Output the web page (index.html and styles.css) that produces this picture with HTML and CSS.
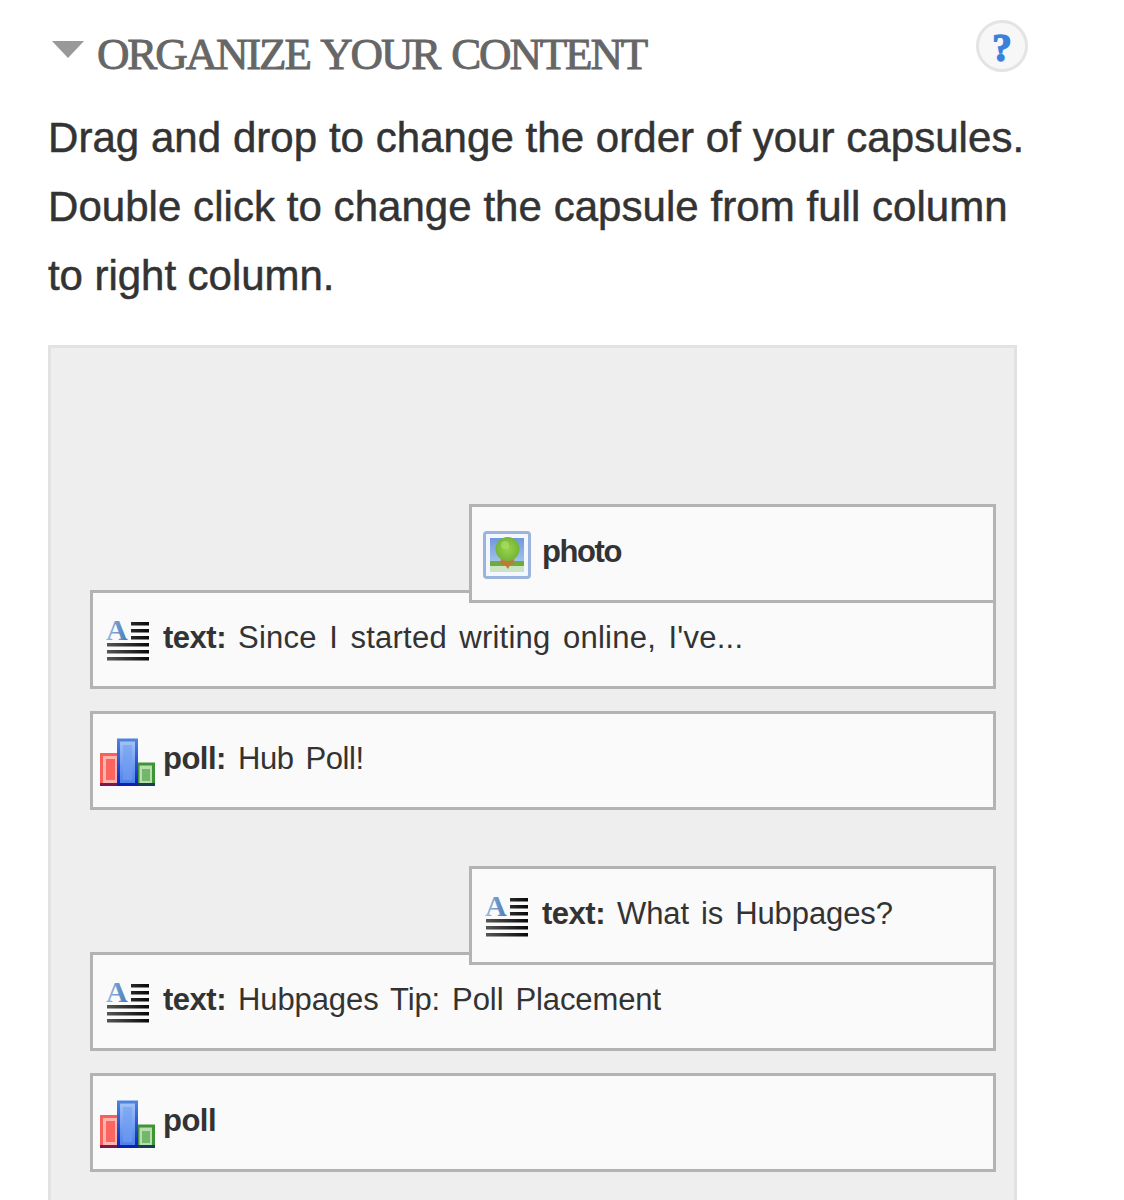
FILE: index.html
```html
<!DOCTYPE html>
<html lang="en">
<head>
  <meta charset="UTF-8">
  <meta name="viewport" content="width=device-width, initial-scale=1.0">
  <title>Organize Your Content</title>
  <link rel="stylesheet" href="styles.css">
</head>
<body>
  <!-- shared icons -->
  <svg class="defs" width="0" height="0">
    <defs>
      <linearGradient id="line" gradientUnits="userSpaceOnUse" x1="7" x2="49" y1="0" y2="0"><stop offset="0" stop-color="#555"/><stop offset="1" stop-color="#080808"/></linearGradient>
      <linearGradient id="letter" x1="0" x2="1"><stop offset="0" stop-color="#9dbbe0"/><stop offset="1" stop-color="#4478b8"/></linearGradient>
      <linearGradient id="blue" x1="0" x2="0" y1="0" y2="1"><stop offset="0" stop-color="#a4c3f8"/><stop offset="1" stop-color="#4a7fe8"/></linearGradient>
      <linearGradient id="blue-edge" x1="0" x2="0" y1="0" y2="1"><stop offset="0" stop-color="#4d83dd"/><stop offset="1" stop-color="#0a22c4"/></linearGradient>
      <linearGradient id="sky" x1="0" x2="0" y1="0" y2="1"><stop offset="0" stop-color="#7197dd"/><stop offset="1" stop-color="#a3c4ee"/></linearGradient>
      <radialGradient id="tree"><stop offset="0" stop-color="#9bd34c"/><stop offset="1" stop-color="#74b537"/></radialGradient>
    </defs>
    <symbol id="icon-lines" viewBox="0 0 56 50">
      <g fill="url(#line)">
        <rect x="31" y="6" width="18" height="3.5"/>
        <rect x="31" y="13" width="18" height="3.5"/>
        <rect x="31" y="20" width="18" height="3.5"/>
        <rect x="7" y="27" width="42" height="3.5"/>
        <rect x="7" y="34" width="42" height="3.5"/>
        <rect x="7" y="41" width="42" height="3.5"/>
      </g>
    </symbol>
    <symbol id="icon-poll" viewBox="0 0 56 50">
      <rect x="1.5" y="17.5" width="17" height="30" fill="#ffb5ae" stroke="#f9605c" stroke-width="3"/>
      <rect x="6" y="22" width="9" height="21" fill="#fb655d"/>
      <rect x="0" y="46" width="18" height="3" fill="#7c1750"/>
      <rect x="38" y="27" width="15.5" height="20.5" fill="#b9dcb0" stroke="#3f9438" stroke-width="3"/>
      <rect x="42" y="32" width="8" height="12" fill="#73b768"/>
      <rect x="37" y="46" width="18" height="3" fill="#173f54"/>
      <rect x="18.5" y="3" width="18" height="44.5" fill="url(#blue)" stroke="url(#blue-edge)" stroke-width="3"/>
      <rect x="23" y="8" width="9" height="35" fill="#6f9ef2" opacity=".6"/>
      <rect x="17" y="46" width="21" height="3" fill="#0b20b6"/>
    </symbol>
    <symbol id="icon-photo" viewBox="0 0 56 50">
      <rect x="5.5" y="2.5" width="45" height="45" rx="2.5" fill="#f3f7ff" stroke="#9cb4dd" stroke-width="3"/>
      <rect x="11" y="8" width="34" height="25" fill="url(#sky)"/>
      <rect x="11" y="31" width="34" height="5" fill="#6eac3d"/>
      <rect x="11" y="36" width="34" height="6" fill="#cbe3c3"/>
      <path d="M22 29h13v4l-4 2-2 4-3-4-5-1z" fill="#bd7b35"/>
      <circle cx="28.5" cy="19" r="12" fill="url(#tree)"/>
      <circle cx="26" cy="15" r="4" fill="#b1e26a" opacity=".6"/>
    </symbol>
  </svg>

  <div class="organizer">
    <div class="header">
      <span class="arrow"></span>
      <h1>ORGANIZE YOUR CONTENT</h1>
      <span class="help">?</span>
    </div>

    <p class="intro">
      <span class="line-1">Drag and drop to change the order of your capsules.</span><br>
      <span class="line-2">Double click to change the capsule from full column</span><br>
      <span class="line-3">to right column.</span>
    </p>

    <div class="capsules">
      <div class="capsule right">
        <svg class="icon"><use href="#icon-photo"/></svg>
        <b class="photo">photo</b>
      </div>
      <div class="capsule">
        <svg class="icon" viewBox="0 0 56 50"><text x="6" y="24" class="icon-letter" fill="url(#letter)">A</text><use href="#icon-lines"/></svg>
        <b>text:</b><span class="name wide">Since I started writing online, I've...</span>
      </div>
      <div class="capsule">
        <svg class="icon"><use href="#icon-poll"/></svg>
        <b>poll:</b><span class="name poll">Hub Poll!</span>
      </div>
      <div class="capsule right spaced">
        <svg class="icon" viewBox="0 0 56 50"><text x="6" y="24" class="icon-letter" fill="url(#letter)">A</text><use href="#icon-lines"/></svg>
        <b>text:</b><span class="name">What is Hubpages?</span>
      </div>
      <div class="capsule">
        <svg class="icon" viewBox="0 0 56 50"><text x="6" y="24" class="icon-letter" fill="url(#letter)">A</text><use href="#icon-lines"/></svg>
        <b>text:</b><span class="name">Hubpages Tip: Poll Placement</span>
      </div>
      <div class="capsule">
        <svg class="icon"><use href="#icon-poll"/></svg>
        <b>poll</b>
      </div>
    </div>
  </div>
</body>
</html>
```
FILE: styles.css
```css
* {
  box-sizing: border-box;
}

body {
  margin: 0;
  height: 1200px;
  overflow: hidden;
  background: #fff;
  color: #333;
  font-family: "Liberation Sans", Arial, sans-serif;
}

.defs {
  display: block;
}

.organizer {
  width: 1028px;
  height: 1200px;
  padding: 20px 0 0 48px;
}

.header {
  display: flex;
  height: 60px;
}

.arrow {
  width: 32px;
  height: 17px;
  margin: 21px 0 0 4px;
  background: #999;
  clip-path: polygon(0 0, 100% 0, 50% 100%);
}

h1 {
  margin: 4px 0 0 13px;
  color: #666;
  font: normal 45px/60px "Liberation Serif", "Times New Roman", serif;
  letter-spacing: -2.15px;
  word-spacing: 3px;
  white-space: nowrap;
  -webkit-text-stroke: 0.9px #666;
}

.help {
  width: 52px;
  height: 52px;
  margin-left: auto;
  border: 3px solid #e4e4e4;
  border-radius: 50%;
  background: #f7f7f7;
  color: #3a80dd;
  font: bold 39px/50px "Liberation Serif", serif;
  text-align: center;
  -webkit-text-stroke: 1.5px #3a80dd;
}

.intro {
  margin: 23px 0 0;
  font-size: 42px;
  line-height: 69px;
  letter-spacing: 0.05px;
  white-space: nowrap;
  -webkit-text-stroke: 0.5px #333;
}

.line-3 {
  letter-spacing: -0.05px;
}

.capsules {
  width: 969px;
  height: 900px;
  margin-top: 35px;
  padding: 156px 18px 0 39px;
  border: 3px solid #e2e2e2;
  background: #eee;
}

.capsule {
  display: flex;
  align-items: center;
  height: 99px;
  margin-bottom: 22px;
  padding-left: 7px;
  border: 3px solid #b3b3b3;
  background: #fafafa;
  font-size: 31px;
  white-space: nowrap;
}

.capsule.right {
  position: relative;
  width: 527px;
  margin: 0 0 -13px auto;
}

.capsule.spaced {
  margin-top: 56px;
}

.icon {
  width: 56px;
  height: 50px;
  margin-top: 3px;
  overflow: visible;
}

.icon-letter {
  font: bold 30px "Liberation Serif", serif;
}

.capsule b {
  width: 75px;
  margin: -4px 0 0 7px;
  letter-spacing: -0.5px;
}

.capsule .photo {
  width: auto;
  letter-spacing: -1.4px;
}

.name {
  margin-top: -4px;
  letter-spacing: -0.1px;
  word-spacing: 3.5px;
}

.name.wide {
  letter-spacing: 0.25px;
}

.name.poll {
  letter-spacing: -0.4px;
}
```
